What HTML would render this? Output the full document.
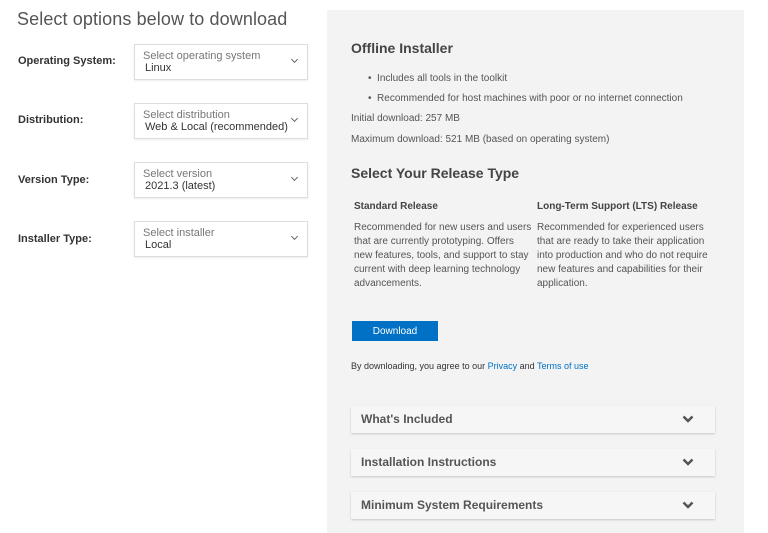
<!DOCTYPE html>
<html><head><style>
body{margin:0;width:768px;height:533px;background:#fff;font-family:"Liberation Sans",sans-serif;color:#333;position:relative;overflow:hidden}
.a{position:absolute;white-space:nowrap}
h1{position:absolute;left:17px;top:9px;margin:0;font-weight:normal;font-size:18px;color:#555;letter-spacing:.1px}
.lbl{position:absolute;left:18px;font-size:11px;font-weight:bold;color:#333}
.sel{position:absolute;left:134px;width:172px;height:34px;border:1px solid #ddd;background:#fff;box-shadow:0 1px 2px rgba(0,0,0,.08)}
.sel .p{position:absolute;left:8px;top:5px;font-size:11px;color:#777}
.sel .v{position:absolute;left:10px;top:17px;font-size:11px;color:#333}
.sel .c{position:absolute;right:10px;top:12px;width:4px;height:4px;border-right:1px solid #666;border-bottom:1px solid #666;transform:rotate(45deg)}
.panel{position:absolute;left:327px;top:10px;width:417px;height:523px;background:#f3f3f3}
.t{font-size:10px;color:#555}
.acc{position:absolute;left:351px;width:364px;height:27px;background:#f6f6f6;box-shadow:0 1px 2px rgba(0,0,0,.18)}
.acc span{position:absolute;left:10px;top:6px;font-size:12px;font-weight:bold;color:#555}
.acc svg{position:absolute;right:21px;top:9px}
</style></head><body>
<h1>Select options below to download</h1>
<div class="lbl" style="top:55px">Operating System:</div>
<div class="lbl" style="top:114px">Distribution:</div>
<div class="lbl" style="top:174px">Version Type:</div>
<div class="lbl" style="top:233px">Installer Type:</div>
<div class="sel" style="top:44px"><div class="p">Select operating system</div><div class="v">Linux</div><div class="c"></div></div>
<div class="sel" style="top:103px"><div class="p">Select distribution</div><div class="v">Web &amp; Local (recommended)</div><div class="c"></div></div>
<div class="sel" style="top:162px"><div class="p">Select version</div><div class="v">2021.3 (latest)</div><div class="c"></div></div>
<div class="sel" style="top:221px"><div class="p">Select installer</div><div class="v">Local</div><div class="c"></div></div>
<div class="panel"></div>
<div class="a" style="left:351px;top:40px;font-size:14px;font-weight:bold;color:#444">Offline Installer</div>
<div class="a t" style="left:368px;top:73px">•&nbsp; Includes all tools in the toolkit</div>
<div class="a t" style="left:368px;top:93px">•&nbsp; Recommended for host machines with poor or no internet connection</div>
<div class="a t" style="left:351px;top:113px">Initial download: 257 MB</div>
<div class="a t" style="left:351px;top:134px">Maximum download: 521 MB (based on operating system)</div>
<div class="a" style="left:351px;top:165px;font-size:14px;font-weight:bold;color:#444">Select Your Release Type</div>
<div class="a t" style="left:354px;top:201px;font-weight:bold;color:#444">Standard Release</div>
<div class="a t" style="left:537px;top:201px;font-weight:bold;color:#444">Long-Term Support (LTS) Release</div>
<div class="a t" style="left:354px;top:221px;line-height:14px;white-space:normal;width:180px">Recommended for new users and users that are currently prototyping. Offers new features, tools, and support to stay current with deep learning technology advancements.</div>
<div class="a t" style="left:537px;top:221px;line-height:14px;white-space:normal;width:185px">Recommended for experienced users that are ready to take their application into production and who do not require new features and capabilities for their application.</div>
<div class="a" style="left:352px;top:321px;width:86px;height:20px;background:#0071c5;color:#fff;font-size:10px;text-align:center;line-height:22px">Download</div>
<div class="a" style="left:351px;top:361px;font-size:9px;color:#333">By downloading, you agree to our <span style="color:#0071c5">Privacy</span> and <span style="color:#0071c5">Terms of use</span></div>
<div class="acc" style="top:406px"><span>What's Included</span><svg width="12" height="8" viewBox="0 0 12 8"><path d="M1.5 1.5L6 6L10.5 1.5" stroke="#555" stroke-width="2.5" fill="none"/></svg></div>
<div class="acc" style="top:449px"><span>Installation Instructions</span><svg width="12" height="8" viewBox="0 0 12 8"><path d="M1.5 1.5L6 6L10.5 1.5" stroke="#555" stroke-width="2.5" fill="none"/></svg></div>
<div class="acc" style="top:492px"><span>Minimum System Requirements</span><svg width="12" height="8" viewBox="0 0 12 8"><path d="M1.5 1.5L6 6L10.5 1.5" stroke="#555" stroke-width="2.5" fill="none"/></svg></div>
</body></html>
